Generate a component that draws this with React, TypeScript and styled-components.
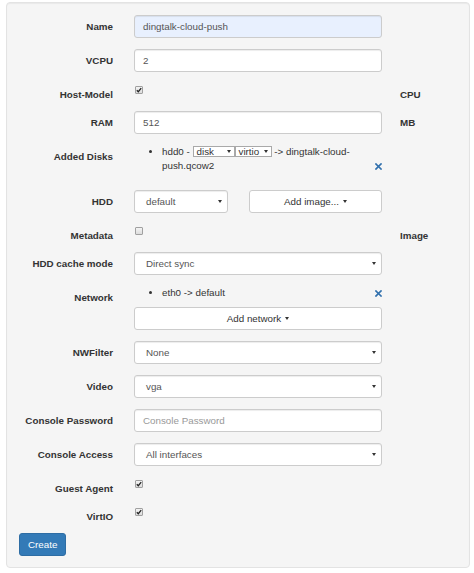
import React from 'react';
import styled, { createGlobalStyle } from 'styled-components';

const GlobalStyle = createGlobalStyle`
  html, body { margin: 0; padding: 0; background: #fff; }
  body {
    font-family: "Liberation Sans", Arial, Helvetica, sans-serif;
    font-size: 9.8px;
    color: #333;
  }
  * { box-sizing: border-box; }
`;

const Page = styled.div`
  padding: 2px 4px 5px 6px;
`;

const Well = styled.form`
  width: 464px;
  background: #f5f5f5;
  border: 1px solid #e3e3e3;
  border-radius: 4px;
  box-shadow: inset 0 1px 1px rgba(0, 0, 0, 0.05);
  padding: 12px 12px 11px;
  display: flex;
  flex-direction: column;
  gap: 11px;
`;

const Row = styled.div<{ $compact?: boolean }>`
  display: grid;
  grid-template-columns: 94px 248px 1fr;
  column-gap: 21px;
  align-items: start;
  ${(p) => (p.$compact ? 'height: 17px;' : '')}
`;

const Label = styled.label`
  text-align: right;
  font-weight: bold;
  padding-top: 5px;
  line-height: 13px;
  color: #333;
  white-space: nowrap;
`;

const Unit = styled.span`
  font-weight: bold;
  padding-top: 5px;
  line-height: 13px;
  margin-left: -3px;
  color: #333;
`;

const TextInput = styled.div<{ $autofill?: boolean; $placeholder?: boolean }>`
  height: 23px;
  padding: 0 8px;
  line-height: 21px;
  border: 1px solid #ccc;
  border-radius: 3px;
  background: ${(p) => (p.$autofill ? '#e8f0fe' : '#fff')};
  color: ${(p) => (p.$placeholder ? '#999' : '#555')};
  box-shadow: inset 0 1px 1px rgba(0, 0, 0, 0.075);
  white-space: nowrap;
  overflow: hidden;
`;

const SelectBox = styled.div`
  height: 23px;
  padding: 0 5px 0 11px;
  border: 1px solid #ccc;
  border-radius: 3px;
  background: #fff;
  color: #555;
  box-shadow: inset 0 1px 1px rgba(0, 0, 0, 0.075);
  display: flex;
  align-items: center;
  justify-content: space-between;
  white-space: nowrap;
`;

const Caret = styled.span<{ $color?: string }>`
  display: inline-block;
  width: 0;
  height: 0;
  border-left: 2.5px solid transparent;
  border-right: 2.5px solid transparent;
  border-top: 3.5px solid ${(p) => p.$color ?? '#333'};
`;

const Button = styled.div`
  height: 23px;
  border: 1px solid #ccc;
  border-radius: 3px;
  background: #fff;
  color: #333;
  display: flex;
  align-items: center;
  justify-content: center;
  gap: 4px;
  white-space: nowrap;
`;

const SplitControl = styled.div`
  display: grid;
  grid-template-columns: 94px 1fr;
  column-gap: 21px;
`;

const ItemList = styled.ul<{ $mb?: number }>`
  margin: 0 0 ${(p) => p.$mb ?? 7}px;
  padding-left: 28px;
  line-height: 14px;
  list-style: disc;
  color: #333;
`;

const MiniSelect = styled.span<{ $w: number }>`
  display: inline-flex;
  align-items: center;
  justify-content: space-between;
  width: ${(p) => p.$w}px;
  height: 11px;
  line-height: 9px;
  padding: 0 3px 0 3px;
  border: 1px solid #a9a9a9;
  background: #fff;
  color: #333;
`;

const RemoveLink = styled.span`
  float: right;
  height: 14px;
  display: flex;
  align-items: center;
`;

const CheckBox = styled.span`
  display: flex;
  align-items: center;
  justify-content: center;
  width: 8px;
  height: 8px;
  margin-top: 3px;
  margin-left: 1px;
  border: 1px solid #a0a0a0;
  border-radius: 1px;
  background: linear-gradient(#f4f4f4, #dcdcdc);
`;

const PrimaryButton = styled.button`
  align-self: flex-start;
  height: 23px;
  padding: 0 8px;
  border: 1px solid #2e6da4;
  border-radius: 3px;
  background: #337ab7;
  color: #fff;
  font-family: inherit;
  font-size: 9.8px;
  line-height: 21px;
`;

const RemoveIcon = () => (
  <svg width="7" height="7" viewBox="0 0 7 7">
    <path d="M1 1 L6 6 M6 1 L1 6" stroke="#3170ad" strokeWidth="1.7" strokeLinecap="square" />
  </svg>
);

const Check = ({ checked }: { checked?: boolean }) => (
  <CheckBox>
    {checked && (
      <svg width="6" height="6" viewBox="0 0 6 6">
        <path d="M0.8 3.3 L2.3 4.7 L5.2 1.2" stroke="#222" strokeWidth="1.3" fill="none" />
      </svg>
    )}
  </CheckBox>
);

const InputRow = ({
  label,
  children,
  unit,
  compact,
}: {
  label: string;
  children: React.ReactNode;
  unit?: string;
  compact?: boolean;
}) => (
  <Row $compact={compact}>
    <Label>{label}</Label>
    <div>{children}</div>
    {unit ? <Unit>{unit}</Unit> : <span />}
  </Row>
);

const Select = ({ value }: { value: string }) => (
  <SelectBox>
    <span>{value}</span>
    <Caret />
  </SelectBox>
);

export default function App() {
  return (
    <Page>
      <GlobalStyle />
      <Well onSubmit={(e) => e.preventDefault()}>
        <InputRow label="Name">
          <TextInput $autofill>dingtalk-cloud-push</TextInput>
        </InputRow>
        <InputRow label="VCPU">
          <TextInput>2</TextInput>
        </InputRow>
        <InputRow label="Host-Model" unit="CPU" compact>
          <Check checked />
        </InputRow>
        <InputRow label="RAM" unit="MB">
          <TextInput>512</TextInput>
        </InputRow>
        <InputRow label="Added Disks">
          <ItemList $mb={6}>
            <li>
              hdd0 -{' '}
              <MiniSelect $w={42}>
                disk
                <Caret />
              </MiniSelect>
              <MiniSelect $w={37}>
                virtio
                <Caret />
              </MiniSelect>{' '}
              -&gt; dingtalk-cloud-push.qcow2
              <RemoveLink>
                <RemoveIcon />
              </RemoveLink>
            </li>
          </ItemList>
        </InputRow>
        <InputRow label="HDD">
          <SplitControl>
            <Select value="default" />
            <Button>
              Add image...
              <Caret />
            </Button>
          </SplitControl>
        </InputRow>
        <InputRow label="Metadata" unit="Image" compact>
          <Check />
        </InputRow>
        <InputRow label="HDD cache mode">
          <Select value="Direct sync" />
        </InputRow>
        <InputRow label="Network">
          <ItemList>
            <li>
              eth0 -&gt; default
              <RemoveLink>
                <RemoveIcon />
              </RemoveLink>
            </li>
          </ItemList>
          <Button>
            Add network
            <Caret />
          </Button>
        </InputRow>
        <InputRow label="NWFilter">
          <Select value="None" />
        </InputRow>
        <InputRow label="Video">
          <Select value="vga" />
        </InputRow>
        <InputRow label="Console Password">
          <TextInput $placeholder>Console Password</TextInput>
        </InputRow>
        <InputRow label="Console Access">
          <Select value="All interfaces" />
        </InputRow>
        <InputRow label="Guest Agent" compact>
          <Check checked />
        </InputRow>
        <InputRow label="VirtIO" compact>
          <Check checked />
        </InputRow>
        <PrimaryButton type="submit">Create</PrimaryButton>
      </Well>
    </Page>
  );
}
